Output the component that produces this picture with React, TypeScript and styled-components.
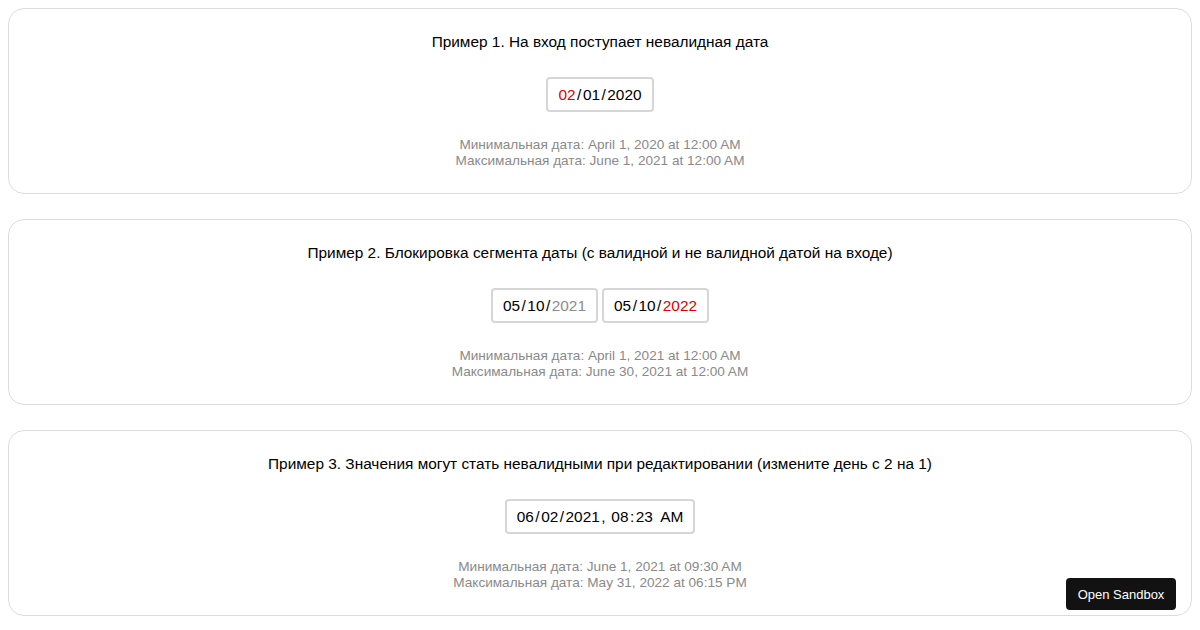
import React, { FC } from "react";
import styled, { createGlobalStyle } from "styled-components";

const GlobalStyle = createGlobalStyle`
  body {
    margin: 8px;
    font-family: "Liberation Sans", Arial, sans-serif;
    background: #fff;
    color: #000;
  }
`;

const Page = styled.div`
  display: flex;
  flex-direction: column;
  gap: 25px;
`;

const Card = styled.section`
  border: 1px solid #dcdcdc;
  border-radius: 16px;
  padding: 24px 24px 24px;
  display: flex;
  flex-direction: column;
  align-items: center;
`;

const Title = styled.div`
  font-size: 15.4px;
  line-height: 18px;
  margin-bottom: 26px;
`;

const Fields = styled.div`
  display: flex;
  gap: 4px;
  margin-bottom: 25px;
`;

const Field = styled.div`
  display: inline-flex;
  align-items: center;
  border: 2px solid #d6d6d6;
  border-radius: 4px;
  padding: 0 9px;
  height: 31px;
  font-size: 15.4px;
  line-height: 19px;
`;

type SegmentTone = "normal" | "invalid" | "disabled";

const Segment = styled.span<{ $tone?: SegmentTone }>`
  padding: 0 1px;
  color: ${({ $tone }) =>
    $tone === "invalid" ? "#e00000" : $tone === "disabled" ? "#8c8c8c" : "#000"};
`;

const Literal = styled.span`
  padding: 0 0.5px;
  white-space: pre;
`;

const Info = styled.div`
  font-size: 13.6px;
  line-height: 16px;
  color: #8a8a8a;
  text-align: center;
`;

const SandboxButton = styled.button`
  position: fixed;
  right: 24px;
  bottom: 20px;
  width: 110px;
  height: 32px;
  border: none;
  border-radius: 4px;
  background: #121212;
  color: #fff;
  font-family: "Liberation Sans", Arial, sans-serif;
  font-size: 13px;
  cursor: pointer;
`;

type DateParts = {
  month: string;
  day: string;
  year: string;
  tones?: Partial<Record<"month" | "day" | "year", SegmentTone>>;
};

const DateInput: FC<DateParts> = ({ month, day, year, tones = {} }) => (
  <Field>
    <Segment $tone={tones.month}>{month}</Segment>
    <Literal>/</Literal>
    <Segment $tone={tones.day}>{day}</Segment>
    <Literal>/</Literal>
    <Segment $tone={tones.year}>{year}</Segment>
  </Field>
);

const App: FC = () => {
  return (
    <>
      <GlobalStyle />
      <Page>
        <Card>
          <Title>Пример 1. На вход поступает невалидная дата</Title>
          <Fields>
            <DateInput month="02" day="01" year="2020" tones={{ month: "invalid" }} />
          </Fields>
          <Info>
            <div>Минимальная дата: April 1, 2020 at 12:00 AM</div>
            <div>Максимальная дата: June 1, 2021 at 12:00 AM</div>
          </Info>
        </Card>

        <Card>
          <Title>Пример 2. Блокировка сегмента даты (с валидной и не валидной датой на входе)</Title>
          <Fields>
            <DateInput month="05" day="10" year="2021" tones={{ year: "disabled" }} />
            <DateInput month="05" day="10" year="2022" tones={{ year: "invalid" }} />
          </Fields>
          <Info>
            <div>Минимальная дата: April 1, 2021 at 12:00 AM</div>
            <div>Максимальная дата: June 30, 2021 at 12:00 AM</div>
          </Info>
        </Card>

        <Card>
          <Title>Пример 3. Значения могут стать невалидными при редактировании (измените день с 2 на 1)</Title>
          <Fields>
            <Field>
              <Segment>06</Segment>
              <Literal>/</Literal>
              <Segment>02</Segment>
              <Literal>/</Literal>
              <Segment>2021</Segment>
              <Literal>, </Literal>
              <Segment>08</Segment>
              <Literal>:</Literal>
              <Segment>23</Segment>
              <Literal> </Literal>
              <Segment>AM</Segment>
            </Field>
          </Fields>
          <Info>
            <div>Минимальная дата: June 1, 2021 at 09:30 AM</div>
            <div>Максимальная дата: May 31, 2022 at 06:15 PM</div>
          </Info>
        </Card>
      </Page>
      <SandboxButton type="button">Open Sandbox</SandboxButton>
    </>
  );
};

export default App;
